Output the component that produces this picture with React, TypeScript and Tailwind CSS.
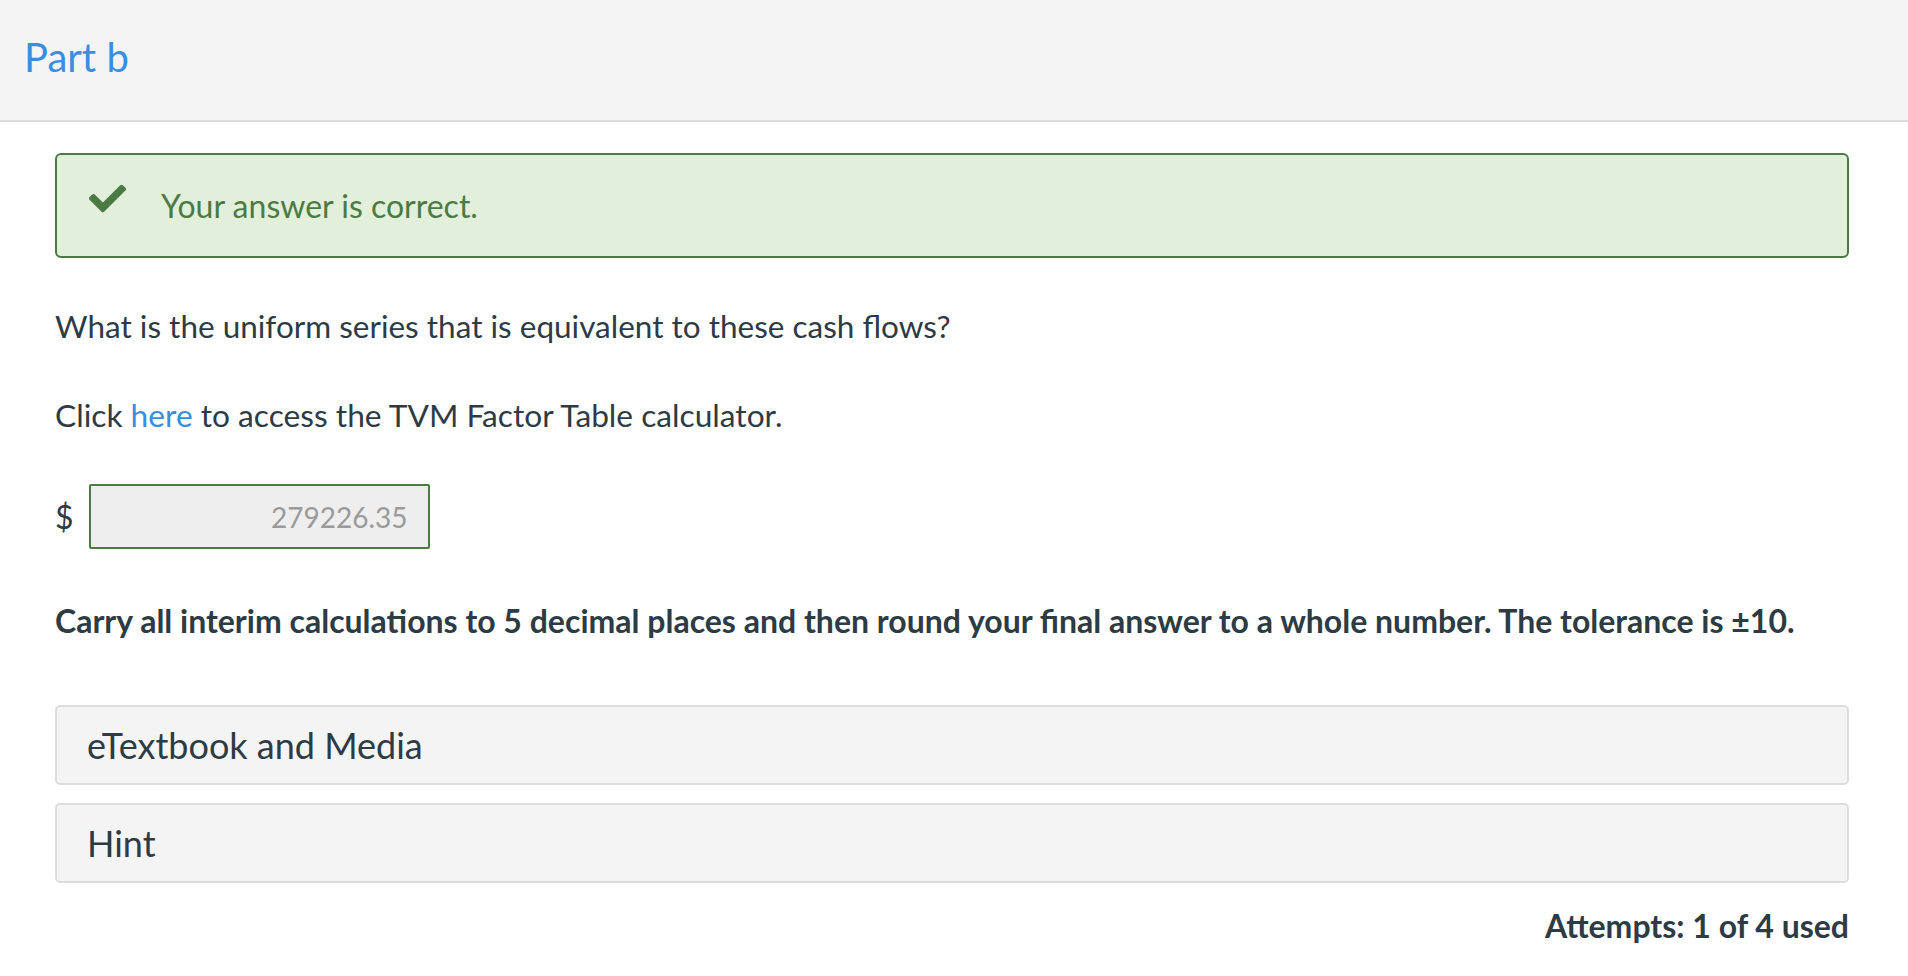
import { FaCheck } from "react-icons/fa";

const panels = ["eTextbook and Media", "Hint"];

export default function App() {
  return (
    <div className="min-h-screen bg-white font-['Lato','Liberation_Sans',sans-serif] text-[#2d3b45]">
      {/* Header */}
      <div className="flex h-[122px] items-center border-b-2 border-[#dddddd] bg-[#f4f4f4] px-[24px]">
        <h2 className="pb-[6px] text-[40px] leading-none text-[#3a8de0]">Part b</h2>
      </div>

      <div className="pl-[55px] pr-[59px] pt-[31px]">
        {/* Result */}
        <div className="flex h-[105px] items-center rounded-[6px] border-2 border-[#4b7b43] bg-[#e2efdb] pl-[32px]">
          <FaCheck className="mb-[14px] h-[37px] w-[37px] text-[#4b7b43]" />
          <span className="ml-[35px] text-[32px] text-[#4b7b43]">Your answer is correct.</span>
        </div>

        <p className="mt-[48px] text-[31.5px] leading-[40px]">
          What is the uniform series that is equivalent to these cash flows?
        </p>

        <p className="mt-[49px] text-[31.7px] leading-[40px]">
          Click <a className="text-[#3a8de0]">here</a> to access the TVM Factor Table calculator.
        </p>

        <div className="mt-[49px] flex items-center gap-[15px]">
          <span className="text-[32px]">$</span>
          <div className="flex h-[65px] w-[341px] items-center justify-end rounded-[2px] border-2 border-[#4b7b43] bg-[#eeeeee] pr-[20px] text-[28px] text-[#9a9a9a]">
            279226.35
          </div>
        </div>

        <p className="mt-[52px] text-[32px] font-bold leading-[40px]">
          Carry all interim calculations to 5 decimal places and then round your final answer to a whole number. The tolerance is ±10.
        </p>

        {/* Collapsible panels */}
        <div className="mt-[64px] flex flex-col gap-[18px]">
          {panels.map((p) => (
            <div
              key={p}
              className="flex h-[80px] items-center rounded-[5px] border-2 border-[#dddddd] bg-[#f4f4f4] px-[30px] text-[36px]"
            >
              {p}
            </div>
          ))}
        </div>

        <div className="mt-[23px] text-right text-[32px] font-bold leading-[40px]">Attempts: 1 of 4 used</div>
      </div>
    </div>
  );
}
